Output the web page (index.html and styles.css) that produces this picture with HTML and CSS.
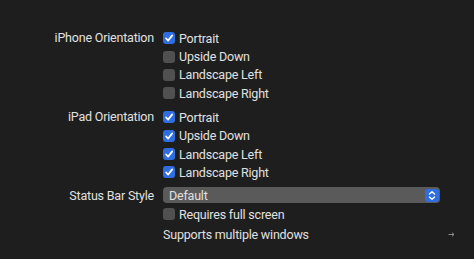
FILE: index.html
```html
<!DOCTYPE html>
<html>
<head>
<meta charset="utf-8">
<link rel="stylesheet" href="styles.css">
</head>
<body>
<div class="form">
  <div class="group">
    <div class="label">iPhone Orientation</div>
    <div class="controls">
      <div class="check on"><span class="box"><svg viewBox="0 0 12 12"><path d="M3 6.3 L5.1 8.6 L9.2 3.4"/></svg></span>Portrait</div>
      <div class="check"><span class="box"></span>Upside Down</div>
      <div class="check"><span class="box"></span>Landscape Left</div>
      <div class="check"><span class="box"></span>Landscape Right</div>
    </div>
  </div>
  <div class="group">
    <div class="label">iPad Orientation</div>
    <div class="controls">
      <div class="check on"><span class="box"><svg viewBox="0 0 12 12"><path d="M3 6.3 L5.1 8.6 L9.2 3.4"/></svg></span>Portrait</div>
      <div class="check on"><span class="box"><svg viewBox="0 0 12 12"><path d="M3 6.3 L5.1 8.6 L9.2 3.4"/></svg></span>Upside Down</div>
      <div class="check on"><span class="box"><svg viewBox="0 0 12 12"><path d="M3 6.3 L5.1 8.6 L9.2 3.4"/></svg></span>Landscape Left</div>
      <div class="check on"><span class="box"><svg viewBox="0 0 12 12"><path d="M3 6.3 L5.1 8.6 L9.2 3.4"/></svg></span>Landscape Right</div>
    </div>
  </div>
  <div class="group status">
    <div class="label">Status Bar Style</div>
    <div class="controls">
      <div class="popup"><span>Default</span><span class="stepper"><svg viewBox="0 0 14 13"><path d="M4.5 5 L7 2.8 L9.5 5 M4.5 8 L7 10.2 L9.5 8"/></svg></span></div>
      <div class="check"><span class="box"></span>Requires full screen</div>
      <div class="row-plain"><span>Supports multiple windows</span><svg class="arrow" viewBox="0 0 7 5"><path d="M0.5 2.5 H6 M4 0.7 L6 2.5 L4 4.3"/></svg></div>
    </div>
  </div>
</div>
</body>
</html>
```
FILE: styles.css
```css
html, body {
  margin: 0;
  padding: 0;
  background: #1e1e1e;
}
body {
  width: 474px;
  height: 259px;
  overflow: hidden;
  font-family: Roboto, "Liberation Sans", sans-serif;
  font-size: 12.5px;
  letter-spacing: -0.2px;
  color: #e0e0e0;
}
.form {
  padding-top: 29px;
  display: flex;
  flex-direction: column;
  gap: 5.5px;
}
.group {
  display: grid;
  grid-template-columns: 154px 1fr;
  column-gap: 9px;
}
.label {
  text-align: right;
  line-height: 18.4px;
}
.controls {
  display: flex;
  flex-direction: column;
  padding-right: 17px;
}
.check {
  display: flex;
  align-items: center;
  height: 18.4px;
  gap: 4px;
}
.box {
  width: 12px;
  height: 12px;
  border-radius: 3px;
  background: #505050;
  box-sizing: border-box;
  flex: none;
  display: flex;
}
.check.on .box {
  background: #2f6ee0;
}
.box svg {
  width: 12px;
  height: 12px;
}
.box path {
  fill: none;
  stroke: #fff;
  stroke-width: 1.7;
  stroke-linecap: round;
  stroke-linejoin: round;
}
.status .label {
  line-height: 16px;
  padding-top: 0.5px;
}
.popup {
  height: 16px;
  margin-right: 17px;
  margin-bottom: 2px;
  border-radius: 4px;
  background: #5a5a5a;
  display: flex;
  align-items: center;
  justify-content: space-between;
  padding: 0 1px 0 6px;
  box-sizing: border-box;
}
.stepper {
  width: 14px;
  height: 13px;
  border-radius: 3px;
  background: #2f6ee0;
  display: flex;
}
.stepper svg {
  width: 14px;
  height: 13px;
}
.stepper path {
  fill: none;
  stroke: #fff;
  stroke-width: 1.4;
  stroke-linecap: round;
  stroke-linejoin: round;
}
.row-plain {
  display: flex;
  justify-content: space-between;
  align-items: center;
  height: 21px;
}
.arrow {
  width: 7px;
  height: 5px;
  margin-right: 2px;
}
.arrow path {
  fill: none;
  stroke: #8c8c8c;
  stroke-width: 1;
}
```
